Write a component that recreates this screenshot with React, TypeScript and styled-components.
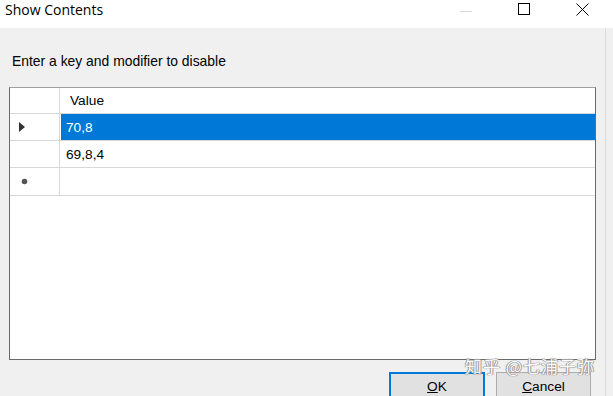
import React from 'react'
import styled, { createGlobalStyle } from 'styled-components';

const GlobalStyle = createGlobalStyle`
  html, body {
    margin: 0;
    padding: 0;
    background: #f0f0f0;
    overflow: hidden;
  }
  * { box-sizing: border-box; }
`;

const Window = styled.div`
  position: relative;
  width: 613px;
  height: 396px;
  background: #f0f0f0;
  display: flex;
  flex-direction: column;
  overflow: hidden;
`;

const TitleBar = styled.div`
  height: 28px;
  background: #ffffff;
  display: flex;
  align-items: center;
  padding-left: 5px;
  padding-right: 2px;
  font-family: "Open Sans", "Noto Sans", sans-serif;
  font-size: 14px;
  color: #000;
`;

const Title = styled.div`
  flex: 1;
  margin-top: -10px;
`;

const Caption = styled.div<{ faint?: boolean }>`
  width: 58px;
  height: 28px;
  display: flex;
  align-items: flex-start;
  justify-content: center;
  padding-top: 3px;
  opacity: ${(p) => (p.faint ? 0.15 : 1)};
`;

const Body = styled.div`
  flex: 1;
  display: flex;
  flex-direction: column;
  padding: 0 9px 0 9px;
  border-right: 1px solid #dcdcdc;
  margin-right: 7px;
`;

const Label = styled.div`
  margin-top: 24px;
  height: 18px;
  line-height: 18px;
  padding-left: 3px;
  font-family: "Liberation Sans", Arial, sans-serif;
  font-size: 13.9px;
  color: #000;
`;

const Grid = styled.div`
  margin-top: 17px;
  height: 273px;
  background: #fff;
  border: 1px solid #6a6a6a;
  border-top-color: #a0a0a0;
  display: flex;
  flex-direction: column;
  font-family: "Liberation Sans", Arial, sans-serif;
  font-size: 13.7px;
`;

const Row = styled.div<{ h: number }>`
  display: grid;
  grid-template-columns: 50px 1fr;
  height: ${(p) => p.h}px;
  border-bottom: 1px solid #d8d8d8;
`;

const HeadCell = styled.div<{ indent?: number }>`
  border-right: 1px solid #d8d8d8;
  display: flex;
  align-items: center;
  justify-content: flex-start;
  padding-left: ${(p) => p.indent ?? 0}px;
  color: #222;
`;

const Cell = styled.div<{ selected?: boolean; header?: boolean }>`
  display: flex;
  align-items: center;
  padding-left: ${(p) => (p.header ? 9 : 5)}px;
  background: ${(p) => (p.selected ? '#0078d7' : 'transparent')};
  color: ${(p) => (p.selected ? '#fff' : '#000')};
  margin-left: 1px;
`;

const Buttons = styled.div`
  margin-top: 12px;
  display: flex;
  justify-content: flex-end;
  gap: 11px;
  padding-right: 5px;
`;

const Button = styled.button<{ primary?: boolean }>`
  width: ${(p) => (p.primary ? 96 : 95)}px;
  height: 29px;
  background: #e1e1e1;
  border: ${(p) => (p.primary ? '2px solid #0078d7' : '1px solid #adadad')};
  font-family: "Liberation Sans", Arial, sans-serif;
  font-size: 13.7px;
  color: #000;
  padding: 0;
  padding-bottom: 1px;
  u { text-decoration: underline; }
`;

const Watermark = styled.div`
  position: absolute;
  left: 465px;
  top: 355px;
  line-height: 22px;
  font-family: "Noto Sans CJK SC", sans-serif;
  font-size: 17px;
  color: #ffffff;
  letter-spacing: 1px;
  text-shadow: 0 0 1px #777, 0 0 1px #777, 1px 0 0 #aaa, -1px 0 0 #aaa;
  opacity: 0.9;
`;

const App = () => {
  return (
    <Window>
      <GlobalStyle />
      <TitleBar>
        <Title>Show Contents</Title>
        <Caption faint>
          <svg width="12" height="14" viewBox="0 0 12 14"><line x1="0" y1="8.5" x2="12" y2="8.5" stroke="#000" strokeWidth="1" /></svg>
        </Caption>
        <Caption>
          <svg width="12" height="12" viewBox="0 0 12 12"><rect x="0.5" y="0.5" width="11" height="11" fill="none" stroke="#000" strokeWidth="1" /></svg>
        </Caption>
        <Caption>
          <svg width="13" height="13" viewBox="0 0 13 13"><path d="M0.5 0.5 L12.5 12.5 M12.5 0.5 L0.5 12.5" stroke="#000" strokeWidth="1" /></svg>
        </Caption>
      </TitleBar>
      <Body>
        <Label>Enter a key and modifier to disable</Label>
        <Grid>
          <Row h={26}>
            <HeadCell />
            <Cell header>Value</Cell>
          </Row>
          <Row h={27}>
            <HeadCell indent={9}>
              <svg width="6" height="10" viewBox="0 0 6 10"><path d="M0 0 L6 5 L0 10 Z" fill="#333" /></svg>
            </HeadCell>
            <Cell selected>70,8</Cell>
          </Row>
          <Row h={27}>
            <HeadCell />
            <Cell>69,8,4</Cell>
          </Row>
          <Row h={28}>
            <HeadCell indent={11}>
              <svg width="7" height="7" viewBox="0 0 7 7"><circle cx="3.5" cy="3.5" r="2.8" fill="#555" /></svg>
            </HeadCell>
            <Cell />
          </Row>
        </Grid>
        <Buttons>
          <Button primary><u>O</u>K</Button>
          <Button><u>C</u>ancel</Button>
        </Buttons>
      </Body>
      <Watermark>知乎 @七浦子弥</Watermark>
    </Window>
  )
}

export default App
